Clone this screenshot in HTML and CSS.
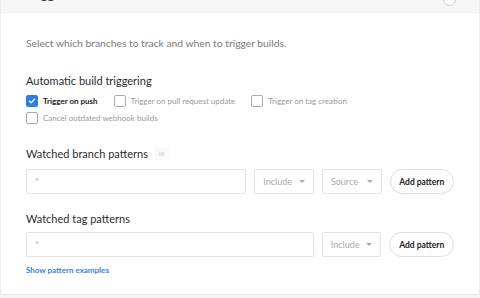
FILE: index.html
```html
<!DOCTYPE html>
<html lang="en">
<head>
  <meta charset="UTF-8" />
  <title>Triggers</title>
  <link rel="stylesheet" href="styles.css">
</head>
<body>
  <div class="card">
    <div class="card-header">
      <span class="card-title">Triggers</span>
      <span class="collapse-btn"></span>
    </div>

    <div class="card-body">
      <p class="intro">Select which branches to track and when to trigger builds.</p>

      <h3 class="section-title">Automatic build triggering</h3>
      <div class="check-row">
        <label class="check checked"><span class="box"><svg viewBox="0 0 12 12" width="12" height="12"><path d="M3 6.2l2 2 4-4.4" fill="none" stroke="#fff" stroke-width="1.6" stroke-linecap="round" stroke-linejoin="round"/></svg></span>Trigger on push</label>
        <label class="check"><span class="box"></span>Trigger on pull request update</label>
        <label class="check"><span class="box"></span>Trigger on tag creation</label>
      </div>
      <div class="check-row">
        <label class="check"><span class="box"></span>Cancel outdated webhook builds</label>
      </div>

      <h3 class="section-title with-icon">Watched branch patterns <span class="help-icon"><span></span></span></h3>
      <div class="pattern-row">
        <div class="field wide">*</div>
        <div class="select">Include<span class="caret"></span></div>
        <div class="select">Source<span class="caret"></span></div>
        <button class="add-btn">Add pattern</button>
      </div>

      <h3 class="section-title after-row">Watched tag patterns</h3>
      <div class="pattern-row">
        <div class="field wider">*</div>
        <div class="select">Include<span class="caret"></span></div>
        <button class="add-btn">Add pattern</button>
      </div>
      <a class="examples-link" href="#">Show pattern examples</a>
    </div>
  </div>
</body>
</html>
```

FILE: styles.css
```css
body {
  margin: 0;
  background: #f4f4f4;
  font-family: Lato, "Open Sans", sans-serif;
  color: #333;
}
.card {
  background: #fff;
  border: 1px solid #ececec;
  border-top: none;
  height: 295px;
  box-sizing: border-box;
  overflow: hidden;
}
.card-header {
  display: flex;
  justify-content: space-between;
  align-items: center;
  height: 40px;
  margin-top: -28px;
  padding: 0 25px;
  background: #f7f7f7;
  border-bottom: 1px solid #efefef;
}
.card-title {
  font-size: 13px;
  font-weight: bold;
  color: #333;
  position: relative;
  top: 2px;
}
.collapse-btn {
  width: 11px;
  height: 11px;
  border: 1px solid #ccc;
  border-radius: 50%;
  background: #fff;
  position: relative;
  top: 7px;
  right: -2px;
}
.card-body {
  padding: 0 25px;
}
.intro {
  margin: 23px 0 0;
  font-size: 10.3px;
  line-height: 14px;
  color: #7a7a7a;
}
.section-title {
  margin: 24px 0 7px;
  font-size: 11px;
  line-height: 14px;
  font-weight: normal;
  color: #2b2b2b;
  display: flex;
  align-items: center;
}
.section-title.with-icon {
  margin-top: 23px;
  margin-bottom: 8px;
}
.section-title.after-row {
  margin-top: 18px;
  margin-bottom: 6px;
}
.check-row {
  display: flex;
  gap: 16px;
  margin-bottom: 5px;
}
.check {
  display: flex;
  align-items: center;
  gap: 5px;
  font-size: 8px;
  line-height: 12px;
  color: #999;
}
.check.checked {
  color: #222;
  font-weight: bold;
}
.box {
  width: 10px;
  height: 10px;
  border: 1px solid #aaa;
  border-radius: 2px;
  display: flex;
  align-items: center;
  justify-content: center;
}
.checked .box {
  background: #2e7de4;
  border-color: #2e7de4;
}
.help-icon {
  width: 14px;
  height: 12px;
  background: #fafafa;
  margin-left: 7px;
  display: flex;
  align-items: center;
  justify-content: center;
}
.help-icon span {
  width: 7px;
  height: 4px;
  border-radius: 3px;
  background: #e6e6e6;
}
.pattern-row {
  display: flex;
  gap: 8px;
  align-items: center;
}
.field, .select {
  border: 1px solid #e3e3e3;
  border-radius: 2px;
  box-sizing: border-box;
  height: 25px;
  font-size: 9px;
  color: #aaa;
  display: flex;
  align-items: center;
}
.field {
  padding-left: 8px;
}
.field.wide { width: 222px; }
.field.wider { width: 290px; }
.select {
  width: 60px;
  padding: 0 8px;
  justify-content: space-between;
}
.caret {
  width: 0;
  height: 0;
  border-left: 3px solid transparent;
  border-right: 3px solid transparent;
  border-top: 3px solid #aaa;
}
.add-btn {
  width: 65px;
  height: 25px;
  border: 1px solid #ddd;
  border-radius: 13px;
  background: #fff;
  font-family: inherit;
  font-size: 8.5px;
  font-weight: bold;
  color: #222;
  padding: 0;
}
.examples-link {
  display: inline-block;
  margin-top: 5px;
  font-size: 8px;
  line-height: 11px;
  font-weight: bold;
  color: #3d7de6;
  text-decoration: none;
}
```
